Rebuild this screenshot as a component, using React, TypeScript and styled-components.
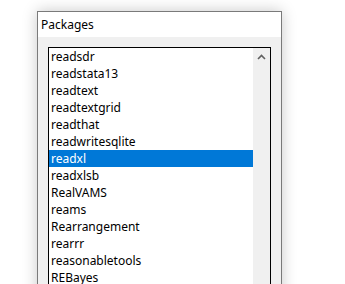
import styled, { createGlobalStyle } from 'styled-components';

const GlobalStyle = createGlobalStyle`
    html, body {
        margin: 0;
        padding: 0;
        background: #ffffff;
        overflow: hidden;
    }
    body {
        font-family: 'Noto Sans', 'Open Sans', sans-serif;
        font-size: 12px;
        color: #000000;
    }
`;

const packages = [
    'readsdr',
    'readstata13',
    'readtext',
    'readtextgrid',
    'readthat',
    'readwritesqlite',
    'readxl',
    'readxlsb',
    'RealVAMS',
    'reams',
    'Rearrangement',
    'rearrr',
    'reasonabletools',
    'REBayes',
];

const Page = styled.div`
    height: 284px;
    padding: 11px 0 0 37px;
    box-sizing: border-box;
    overflow: hidden;
`;

const Window = styled.div`
    width: 245px;
    height: 320px;
    box-sizing: border-box;
    border: 1px solid #7a7a7a;
    background: #f0f0f0;
    box-shadow: 0 0 14px rgba(0, 0, 0, 0.22);
    display: flex;
    flex-direction: column;
`;

const TitleBar = styled.div`
    height: 25px;
    background: #ffffff;
    padding-left: 3px;
    display: flex;
    align-items: center;
    flex-shrink: 0;
`;

const Body = styled.div`
    padding: 10px 10px 0 10px;
    flex: 1;
`;

const ListBox = styled.div`
    border: 1px solid #000000;
    background: #ffffff;
    height: 300px;
    display: flex;
`;

const Items = styled.div`
    flex: 1;
    display: flex;
    flex-direction: column;
`;

const Item = styled.div<{ $selected?: boolean }>`
    height: 17px;
    line-height: 17px;
    padding-left: 2px;
    white-space: nowrap;
    background: ${(p) => (p.$selected ? '#0078d7' : 'transparent')};
    color: ${(p) => (p.$selected ? '#ffffff' : '#000000')};
`;

const ScrollBar = styled.div`
    width: 17px;
    background: #f0f0f0;
    display: flex;
    justify-content: center;
    padding-top: 6px;
    box-sizing: border-box;
`;

export default function App() {
    return (
        <>
            <GlobalStyle />
            <Page>
                <Window>
                    <TitleBar>Packages</TitleBar>
                    <Body>
                        <ListBox>
                            <Items>
                                {packages.map((name) => (
                                    <Item key={name} $selected={name === 'readxl'}>
                                        {name}
                                    </Item>
                                ))}
                            </Items>
                            <ScrollBar>
                                <svg width="9" height="6" viewBox="0 0 9 6">
                                    <path d="M1 5 L4.5 1.5 L8 5" fill="none" stroke="#606060" strokeWidth="1.6" />
                                </svg>
                            </ScrollBar>
                        </ListBox>
                    </Body>
                </Window>
            </Page>
        </>
    );
}
